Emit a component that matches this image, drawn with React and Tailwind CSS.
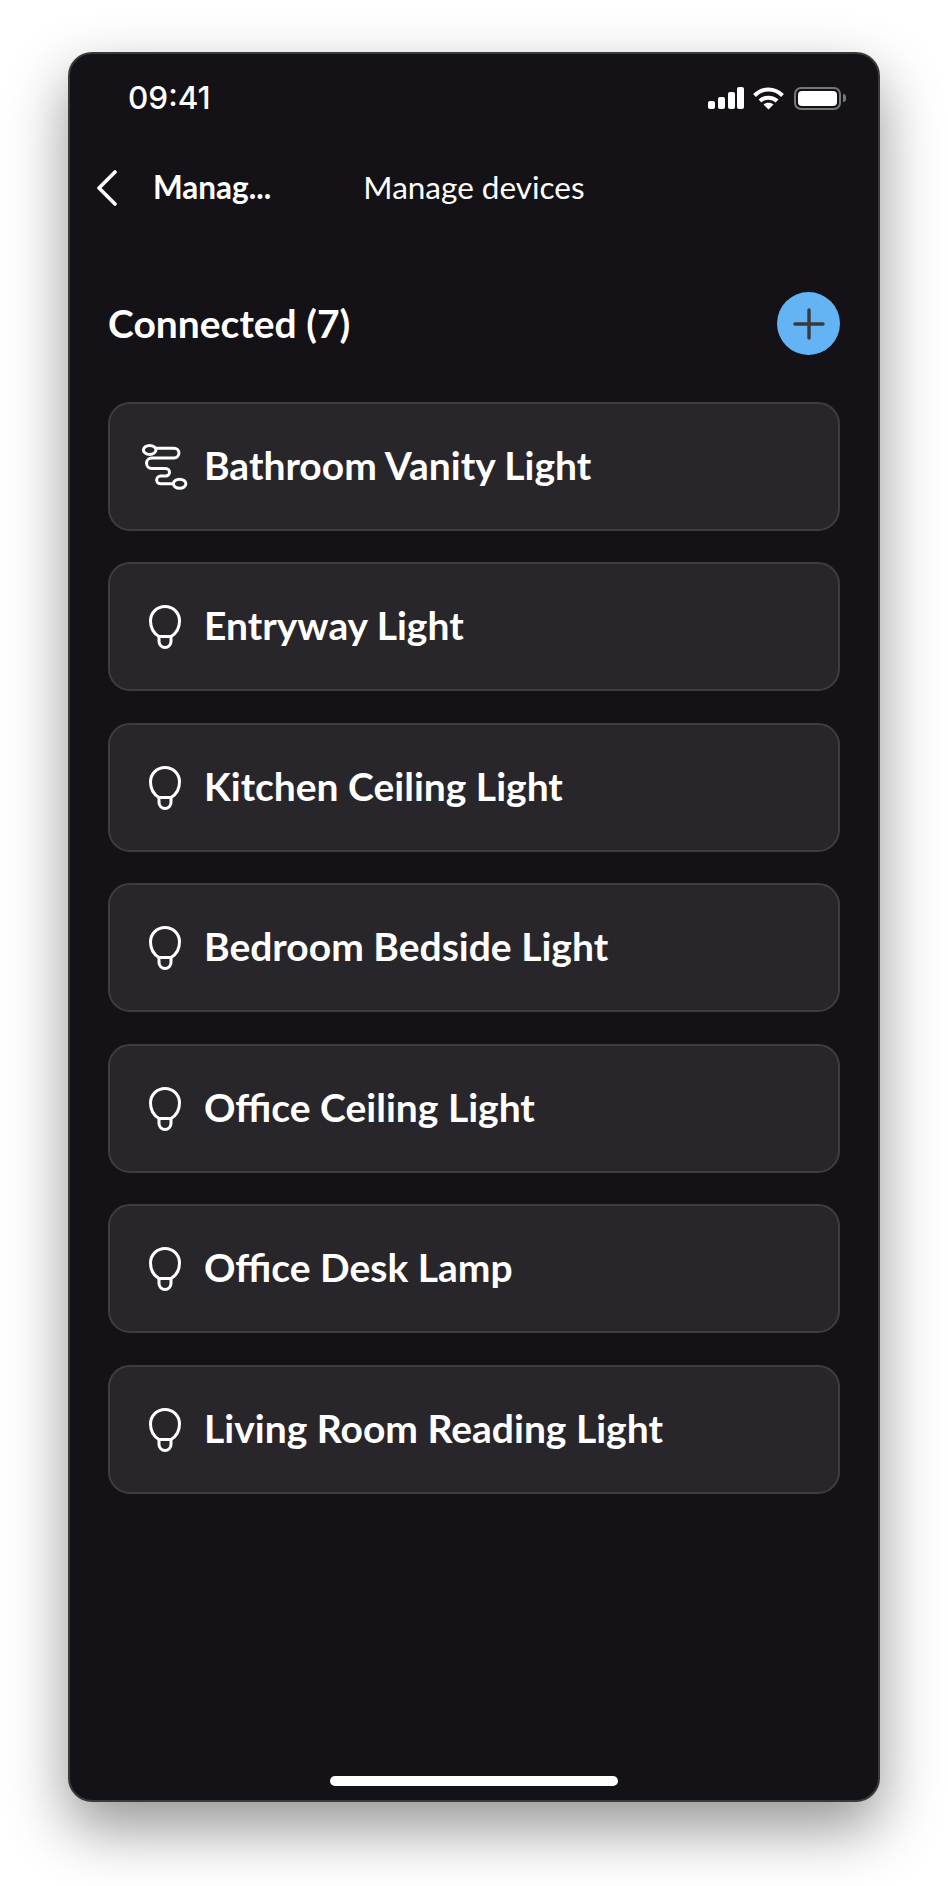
const devices = [
  'Entryway Light',
  'Kitchen Ceiling Light',
  'Bedroom Bedside Light',
  'Office Ceiling Light',
  'Office Desk Lamp',
  'Living Room Reading Light',
];

function StatusIcons() {
  return (
    <div className="flex items-center">
      <svg width="36" height="22" viewBox="0 0 36 22" fill="#fff">
        <rect x="0" y="14" width="7" height="8" rx="2" />
        <rect x="10" y="10" width="7" height="12" rx="2" />
        <rect x="20" y="5" width="7" height="17" rx="2" />
        <rect x="29" y="0" width="7" height="22" rx="2" />
      </svg>
      <svg className="ml-[9px]" width="31" height="23" viewBox="0 0 31 23" fill="none" stroke="#fff" strokeWidth="4">
        <path d="M1.5 8.5C9.5 0.5 21.5 0.5 29.5 8.5" />
        <path d="M7 14C11.5 9.5 19.5 9.5 24 14" />
        <path d="M15.5 22.5L10.5 17.5C13 15 18 15 20.5 17.5Z" fill="#fff" stroke="none" />
      </svg>
      <div className="ml-[10px] flex h-[23px] w-[47px] rounded-[7px] border-2 border-[#77777a] p-[2px]">
        <div className="flex-1 rounded-[4px] bg-white" />
      </div>
      <div className="ml-[2px] h-[8px] w-[3px] rounded-r-full bg-[#77777a]" />
    </div>
  );
}

function BulbIcon() {
  return (
    <svg width="32" height="45" viewBox="0 0 32 45" fill="none" stroke="#fff" strokeWidth="3" strokeLinecap="round" strokeLinejoin="round">
      <path d="M10 32.5C5 29.5 1.5 24.8 1.5 17C1.5 8.8 8 2.5 16 2.5C24 2.5 30.5 8.8 30.5 17C30.5 24.8 27 29.5 22 32.5Z" />
      <path d="M10 32.5V37.5C10 40.8 12.7 43.5 16 43.5C19.3 43.5 22 40.8 22 37.5V32.5" />
    </svg>
  );
}

function RouteIcon() {
  return (
    <svg width="46" height="47" viewBox="130 145 132 135" fill="none" stroke="#fff" strokeWidth="8.5" strokeLinecap="round">
      <path d="M170 160H222A14 14 0 0 1 222 188H158A15 15 0 0 0 158 218H198A11 11 0 0 1 198 240H183A11 11 0 0 0 183 262H219" />
      <ellipse cx="152" cy="165" rx="18" ry="13" />
      <ellipse cx="238" cy="262" rx="18" ry="13" />
    </svg>
  );
}

function DeviceRow({ name, icon }) {
  return (
    <div className="flex h-[129px] items-center rounded-[22px] border-2 border-[#3e3d41] bg-[#28262a]">
      <div className="flex w-[94px] justify-center pl-[16px]">{icon}</div>
      <span className="pb-[2px] text-[39px] font-bold leading-none text-white">{name}</span>
    </div>
  );
}

export default function App() {
  return (
    <div className="flex min-h-screen justify-center bg-white pt-[52px] font-['Lato',sans-serif]">
      <div className="flex h-[1750px] w-[812px] flex-col overflow-hidden rounded-[24px] border-2 border-[#3a3a3c] bg-[#141216] shadow-[0_26px_60px_rgba(0,0,0,0.42)]">
        <div className="flex h-[66px] items-center justify-between pl-[58px] pr-[32px] pt-[22px]">
          <span className="font-['Inter',sans-serif] text-[31.5px] font-medium text-white">09:41</span>
          <StatusIcons />
        </div>

        <div className="relative mt-[48px] flex h-[40px] items-center pl-[27px]">
          <svg width="20" height="36" viewBox="0 0 20 36" fill="none" stroke="#fff" strokeWidth="3.6" strokeLinecap="round" strokeLinejoin="round">
            <path d="M18 2L2 18L18 34" />
          </svg>
          <span className="ml-[36px] text-[31.5px] font-bold text-white">Manag...</span>
          <span className="absolute left-0 right-0 text-center text-[31.5px] text-white">Manage devices</span>
        </div>

        <div className="mt-[84px] flex items-center justify-between px-[38px]">
          <h1 className="text-[39px] font-bold text-white">Connected (7)</h1>
          <button className="flex h-[63px] w-[63px] items-center justify-center rounded-full bg-[#63b3f5]">
            <svg width="32" height="32" viewBox="0 0 32 32" stroke="#3a3a3c" strokeWidth="3.4" strokeLinecap="round">
              <path d="M16 2V30M2 16H30" />
            </svg>
          </button>
        </div>

        <div className="mt-[46.5px] flex flex-col gap-[31.5px] px-[38px]">
          <DeviceRow name="Bathroom Vanity Light" icon={<RouteIcon />} />
          {devices.map((name) => (
            <DeviceRow key={name} name={name} icon={<BulbIcon />} />
          ))}
        </div>

        <div className="mb-[14px] mt-auto h-[10px] w-[288px] self-center rounded-full bg-white" />
      </div>
    </div>
  );
}
